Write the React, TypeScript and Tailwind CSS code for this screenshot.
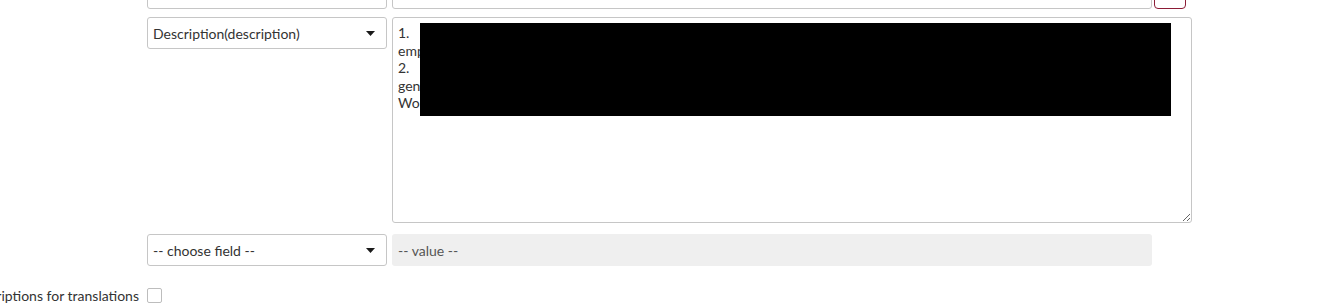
import React from "react";

function Caret() {
  return (
    <svg width="9" height="5" viewBox="0 0 9 5" className="shrink-0">
      <path d="M0 0 L9 0 L4.5 5 Z" fill="#1a1a1a" />
    </svg>
  );
}

function SelectBox({ label }: { label: string }) {
  return (
    <div className="flex h-[32px] w-[240px] shrink-0 items-center justify-between rounded-[3px] border border-[#c6c6c6] bg-white pl-[5px] pr-[11px] text-[14px] text-[#333]">
      <span>{label}</span>
      <Caret />
    </div>
  );
}

export default function App() {
  return (
    <div
      className="h-[303px] w-[1321px] overflow-hidden bg-white text-[14px] text-[#333]"
      style={{ fontFamily: "Lato, 'Open Sans', sans-serif" }}
    >
      <div className="mt-[-23px] flex flex-col">
        {/* row 1 (cut off at top) */}
        <div className="flex pl-[147px]">
          <div className="h-[32px] w-[240px] shrink-0 rounded-[3px] border border-[#c6c6c6] bg-white" />
          <div className="ml-[5px] h-[32px] w-[760px] rounded-[3px] border border-[#c6c6c6] bg-white" />
          <div className="ml-[2px] h-[32px] w-[32px] rounded-[4px] border border-[#8c1c36] bg-white" />
        </div>

        {/* row 2 */}
        <div className="mt-[8px] flex items-start pl-[147px]">
          <SelectBox label="Description(description)" />
          <div className="relative ml-[5px]">
            <textarea
              readOnly
              className="block h-[206px] w-[800px] resize rounded-[3px] border border-[#c6c6c6] bg-white px-[5px] pt-[6px] text-[14px] leading-[17.5px] text-[#333] outline-none"
              style={{ fontFamily: "Lato, 'Open Sans', sans-serif" }}
              defaultValue={"1.\nemp\n2.\ngen\nWo"}
            />
            <div className="absolute left-[28px] top-[6px] h-[93px] w-[751px] bg-black" />
          </div>
        </div>

        {/* row 3 */}
        <div className="mt-[11px] flex items-center pl-[147px]">
          <SelectBox label="-- choose field --" />
          <div className="ml-[5px] flex h-[32px] w-[760px] items-center rounded-[3px] bg-[#efefef] pl-[6px] text-[14px] text-[#555]">
            -- value --
          </div>
        </div>

        {/* row 4 */}
        <div className="mt-[19px] flex items-center">
          <div className="flex w-[139px] shrink-0 justify-end whitespace-nowrap text-[14px] text-[#333]">
            Show descriptions for translations
          </div>
          <div className="ml-[8px] h-[15px] w-[15px] rounded-[2px] border border-[#bdbdbd] bg-white" />
        </div>
      </div>
    </div>
  );
}
